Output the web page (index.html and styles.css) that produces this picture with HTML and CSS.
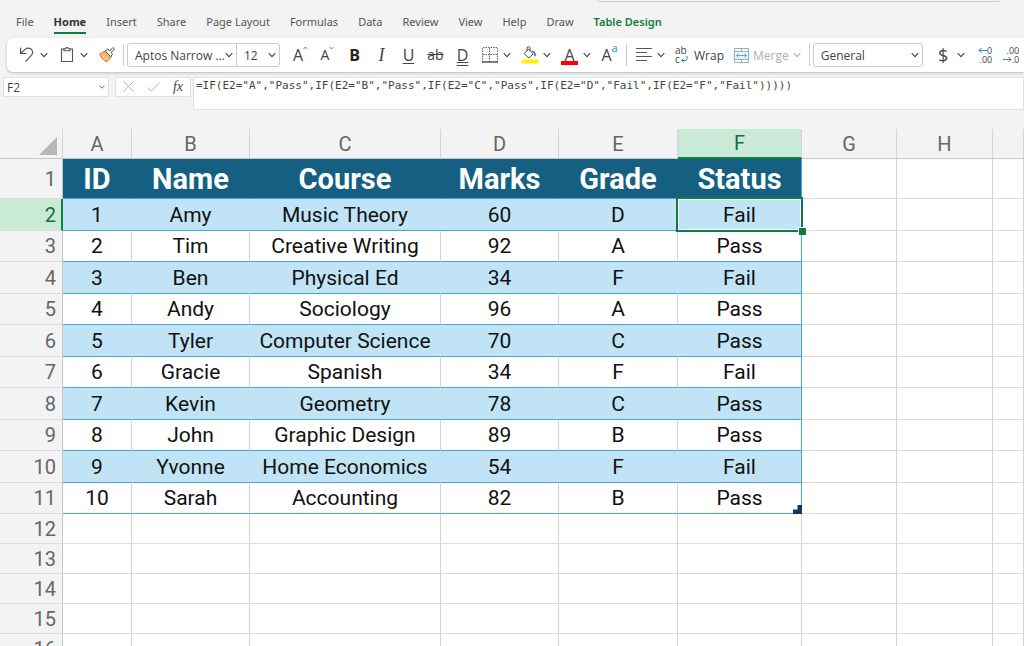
FILE: index.html
```html
<!DOCTYPE html>
<html lang="en">

<head>
  <meta charset="UTF-8">
  <meta name="viewport" content="width=device-width, initial-scale=1.0">
  <title>Grades</title>
  <link rel="stylesheet" href="styles.css">
</head>

<body>
  <svg class="defs" width="0" height="0" aria-hidden="true">
    <symbol id="chevron" viewBox="0 0 8 8">
      <path d="M.7 2.2 4 5.6l3.3-3.4" fill="none" stroke="currentColor" stroke-width="1.1" />
    </symbol>
  </svg>

  <div class="titlebar">
    <div class="search-edge"></div>
  </div>

  <nav class="tabs">
    <a href="#">File</a>
    <a href="#" class="active">Home</a>
    <a href="#">Insert</a>
    <a href="#">Share</a>
    <a href="#">Page Layout</a>
    <a href="#">Formulas</a>
    <a href="#">Data</a>
    <a href="#">Review</a>
    <a href="#">View</a>
    <a href="#">Help</a>
    <a href="#">Draw</a>
    <a href="#" class="context">Table Design</a>
  </nav>

  <div class="ribbon">
    <button class="tool" aria-label="Undo">
      <svg width="18" height="18" viewBox="0 0 18 18" fill="none" stroke="#555" stroke-width="1.2"><path d="M2.6 1.5v6h6M2.8 7.3 7.2 3.4c3-2.500 7-.9 7.400 2.300.2 1.700-.5 3-1.700 4.200L7.500 15.600" /></svg>
    </button>
    <button class="more" aria-label="Undo list"><svg width="8" height="8"><use href="#chevron" /></svg></button>
    <button class="tool" aria-label="Paste">
      <svg width="16" height="18" viewBox="0 0 16 18" fill="none" stroke="#555" stroke-width="1.1"><path d="M5 3H2.500v12.500h11V3H11" /><path d="M5 4.800V2.700h1.500a1.600 1.600 0 0 1 3 0H11v2.100z" /></svg>
    </button>
    <button class="more" aria-label="Paste options"><svg width="8" height="8"><use href="#chevron" /></svg></button>
    <button class="tool" aria-label="Format painter">
      <svg width="18" height="18" viewBox="0 0 18 18"><path d="M1.500 8 8 4.500l5.500 6.500L8.500 16Q3.500 13.500 1.500 8z" fill="#f7b36a" stroke="#ec7c1c" /><path d="m4.500 11 2-1.200M7 13.500l2-2" stroke="#fff" /><path d="m7.200 5 2.600-2 1.800 1.900 3.300-3.400 1.600 1.600-3.300 3.300 1.300 2-2 2.200z" fill="#fff" stroke="#444" /></svg>
    </button>
    <span class="divider"></span>

    <div class="combo">
      <label class="picker picker-font">
        <select aria-label="Font">
          <option>Aptos Narrow ...</option>
        </select>
        <svg width="8" height="8"><use href="#chevron" /></svg>
      </label>
      <label class="picker picker-size">
        <select aria-label="Font size">
          <option>12</option>
        </select>
        <svg width="8" height="8"><use href="#chevron" /></svg>
      </label>
    </div>

    <button class="tool letter" aria-label="Increase font size">A<svg class="caret" width="5" height="4" viewBox="0 0 5 4"><path d="m.5 3 2-2 2 2" fill="none" stroke="#2b88c8" /></svg></button>
    <button class="tool letter small" aria-label="Decrease font size">A<svg class="caret" width="5" height="4" viewBox="0 0 5 4"><path d="m.5 1 2 2 2-2" fill="none" stroke="#2b88c8" /></svg></button>
    <button class="tool letter bold">B</button>
    <button class="tool letter italic">I</button>
    <button class="tool letter underline">U</button>
    <button class="tool letter strike">ab</button>
    <button class="tool letter double">D</button>
    <button class="tool" aria-label="Borders">
      <svg width="16" height="16" viewBox="0 0 16 16" fill="none" stroke="#666"><path d="M.5 15V.5h15V15M7.500 1v14M1 7.500h14" stroke-dasharray="1.500 1" /><path d="M0 15h16" stroke="#444" stroke-width="1.400" /></svg>
    </button>
    <button class="more" aria-label="Border options"><svg width="8" height="8"><use href="#chevron" /></svg></button>
    <button class="tool" aria-label="Fill color">
      <svg width="18" height="18" viewBox="0 0 18 18"><path d="m7.600 3.200 4.700 4.600-4.600 4.300-4.500-4.500zM6 4.800V2.200a1.500 1.500 0 0 1 3 0v3" fill="none" stroke="#444" /><path d="M10.500 4.500q4.500-.5 4.500 6-2.500-.5-1.900-3z" fill="#2b78c4" /><path d="M.5 13.500h17V17.500H.5z" fill="#fff200" /></svg>
    </button>
    <button class="more" aria-label="Fill colors"><svg width="8" height="8"><use href="#chevron" /></svg></button>
    <button class="tool letter font-color">A</button>
    <button class="more" aria-label="Font colors"><svg width="8" height="8"><use href="#chevron" /></svg></button>
    <button class="tool letter grow">A<sup>a</sup></button>
    <span class="divider"></span>

    <button class="tool" aria-label="Align">
      <svg width="16" height="16" viewBox="0 0 16 16" stroke="#555" stroke-width="1.100"><path d="M0 1.500h16M0 5.500h11M0 9.500h16M0 13.500h11" /></svg>
    </button>
    <button class="more" aria-label="Align options"><svg width="8" height="8"><use href="#chevron" /></svg></button>
    <button class="wide">
      <span class="wrap-icon"><span>ab</span><span>c<svg width="8" height="7" viewBox="0 0 8 7" fill="none" stroke="#2b88c8"><path d="M7 0v2.500Q7 4.500 5 4.500H1.500M3.500 2.500l-2 2 2 2" /></svg></span></span>
      Wrap
    </button>
    <button class="wide disabled" disabled>
      <svg width="15" height="15" viewBox="0 0 15 15" fill="none" stroke="#a9a9a9"><path d="M.5.5h14v14H.5zM7.500 0v3.500M7.500 11.500V15" /><path d="M.5 3.500h14v8H.5z" stroke="#79b8e0" fill="#eef7fd" /><path d="M2.500 7.500h10M4.500 5.500l-2 2 2 2M10.500 5.500l2 2-2 2" stroke="#5ba8d8" /></svg>
      Merge
      <svg width="8" height="8"><use href="#chevron" /></svg>
    </button>
    <span class="divider"></span>

    <div class="combo">
      <label class="picker picker-format">
        <select aria-label="Number format">
          <option>General</option>
        </select>
        <svg width="8" height="8"><use href="#chevron" /></svg>
      </label>
    </div>
    <button class="tool letter currency">$</button>
    <button class="more" aria-label="Currency options"><svg width="8" height="8"><use href="#chevron" /></svg></button>
    <button class="tool decimals">
      <span><svg width="9" height="7" viewBox="0 0 9 7" fill="none" stroke="#2b88c8"><path d="M9 3.500H1M3.500 1 1 3.500 3.500 6" /></svg>0</span>
      <span>.00</span>
    </button>
    <button class="tool decimals">
      <span>.00</span>
      <span><svg width="9" height="7" viewBox="0 0 9 7" fill="none" stroke="#2b88c8"><path d="M0 3.500h8M5.500 1 8 3.500 5.500 6" /></svg>.0</span>
    </button>
  </div>

  <div class="formula-bar">
    <label class="name-box">
      <input type="text" value="F2" aria-label="Name box">
      <svg width="6" height="6"><use href="#chevron" /></svg>
    </label>
    <div class="formula-actions">
      <button aria-label="Cancel"><svg width="11" height="11" viewBox="0 0 11 11" stroke="#b5b5b5"><path d="m.5.5 10 10M10.500.5l-10 10" /></svg></button>
      <button aria-label="Enter"><svg width="13" height="10" viewBox="0 0 13 10" fill="none" stroke="#b5b5b5"><path d="m.5 5.500 3.700 3.700L12.500.7" /></svg></button>
      <button class="fx">fx</button>
    </div>
    <input class="formula" type="text" aria-label="Formula" value='=IF(E2="A","Pass",IF(E2="B","Pass",IF(E2="C","Pass",IF(E2="D","Fail",IF(E2="F","Fail")))))'>
  </div>

  <div class="sheet">
    <table class="grid">
      <colgroup>
        <col class="col-head">
        <col class="col-a">
        <col class="col-b">
        <col class="col-c">
        <col class="col-d">
        <col class="col-e">
        <col class="col-f">
        <col class="col-g">
        <col class="col-h">
        <col>
      </colgroup>
      <thead>
        <tr>
          <th class="corner"><svg width="18" height="18" viewBox="0 0 18 18"><path d="M18 0v18H0z" fill="#b8b8b8" /></svg></th>
          <th>A</th><th>B</th><th>C</th><th>D</th><th>E</th><th class="selected">F</th><th>G</th><th>H</th><th></th>
        </tr>
      </thead>
      <tbody class="data">
        <tr class="title"><th>1</th><td>ID</td><td>Name</td><td>Course</td><td>Marks</td><td>Grade</td><td>Status</td><td></td><td></td><td></td></tr>
        <tr class="band"><th class="selected">2</th><td>1</td><td>Amy</td><td>Music Theory</td><td>60</td><td>D</td><td class="current">Fail</td><td></td><td></td><td></td></tr>
        <tr><th>3</th><td>2</td><td>Tim</td><td>Creative Writing</td><td>92</td><td>A</td><td>Pass</td><td></td><td></td><td></td></tr>
        <tr class="band"><th>4</th><td>3</td><td>Ben</td><td>Physical Ed</td><td>34</td><td>F</td><td>Fail</td><td></td><td></td><td></td></tr>
        <tr><th>5</th><td>4</td><td>Andy</td><td>Sociology</td><td>96</td><td>A</td><td>Pass</td><td></td><td></td><td></td></tr>
        <tr class="band"><th>6</th><td>5</td><td>Tyler</td><td>Computer Science</td><td>70</td><td>C</td><td>Pass</td><td></td><td></td><td></td></tr>
        <tr><th>7</th><td>6</td><td>Gracie</td><td>Spanish</td><td>34</td><td>F</td><td>Fail</td><td></td><td></td><td></td></tr>
        <tr class="band"><th>8</th><td>7</td><td>Kevin</td><td>Geometry</td><td>78</td><td>C</td><td>Pass</td><td></td><td></td><td></td></tr>
        <tr><th>9</th><td>8</td><td>John</td><td>Graphic Design</td><td>89</td><td>B</td><td>Pass</td><td></td><td></td><td></td></tr>
        <tr class="band"><th>10</th><td>9</td><td>Yvonne</td><td>Home Economics</td><td>54</td><td>F</td><td>Fail</td><td></td><td></td><td></td></tr>
        <tr><th>11</th><td>10</td><td>Sarah</td><td>Accounting</td><td>82</td><td>B</td><td class="table-end">Pass</td><td></td><td></td><td></td></tr>
      </tbody>
      <tbody class="empty">
        <tr><th>12</th><td></td><td></td><td></td><td></td><td></td><td></td><td></td><td></td><td></td></tr>
        <tr><th>13</th><td></td><td></td><td></td><td></td><td></td><td></td><td></td><td></td><td></td></tr>
        <tr><th>14</th><td></td><td></td><td></td><td></td><td></td><td></td><td></td><td></td><td></td></tr>
        <tr><th>15</th><td></td><td></td><td></td><td></td><td></td><td></td><td></td><td></td><td></td></tr>
        <tr><th>16</th><td></td><td></td><td></td><td></td><td></td><td></td><td></td><td></td><td></td></tr>
      </tbody>
    </table>
  </div>
</body>

</html>
```

FILE: styles.css
```css
* {
  box-sizing: border-box;
}

body {
  margin: 0;
  height: 100vh;
  display: flex;
  flex-direction: column;
  overflow: hidden;
  background-color: #f3f3f3;
  color: #444;
  font-family: "Open Sans", "Noto Sans", sans-serif;
  font-size: 12px;
}

button,
input,
select {
  margin: 0;
  padding: 0;
  border: none;
  background: none;
  color: inherit;
  font: inherit;
}

.defs {
  position: absolute;
}

/* top of the window */
.titlebar {
  display: flex;
  padding: 0 24px 0 597px;
}

.search-edge {
  flex: 1;
  height: 2px;
  border-bottom: 1px solid #d0d0d0;
  border-radius: 0 0 4px 4px;
}

.tabs {
  display: flex;
  gap: 20px;
  height: 36px;
  padding: 10px 16px 0;
  font-family: "Noto Sans", "Open Sans", sans-serif;
  font-size: 11px;
  line-height: 20px;
  white-space: nowrap;
}

.tabs a {
  height: 22px;
  color: #555;
  text-decoration: none;
}

.tabs .active {
  border-bottom: 2px solid #107c41;
  color: #333;
  font-weight: bold;
}

.tabs .context {
  color: #107c41;
  font-weight: 600;
}

/* ribbon */
.ribbon {
  display: flex;
  align-items: center;
  flex-shrink: 0;
  height: 34px;
  margin-left: 7px;
  padding-left: 6px;
  background-color: #fff;
  border-radius: 6px 0 0 6px;
  box-shadow: 0 1px 3px rgba(0, 0, 0, 0.25);
  white-space: nowrap;
}

.ribbon > * {
  flex-shrink: 0;
}

.tool,
.more {
  display: flex;
  align-items: center;
  height: 28px;
}

.tool {
  justify-content: center;
  width: 27px;
}

.more {
  width: 13px;
}

.divider {
  width: 1px;
  height: 22px;
  margin: 0 3px;
  background-color: #ccc;
}

.combo {
  display: flex;
  height: 24px;
  margin-right: 7px;
  border: 1px solid #ccc;
  border-radius: 3px;
}

.picker,
.name-box {
  display: grid;
  align-items: center;
}

.picker select,
.picker svg,
.name-box input,
.name-box svg {
  grid-area: 1 / 1;
}

.picker svg,
.name-box svg {
  justify-self: end;
  margin-right: 3px;
  pointer-events: none;
}

.picker select {
  width: 100%;
  height: 22px;
  padding-left: 7px;
  appearance: none;
}

.picker-font,
.picker-format {
  width: 108px;
}

.picker-size {
  width: 43px;
  border-left: 1px solid #ccc;
}

.letter {
  font-size: 16px;
  line-height: 20px;
}

.small {
  font-size: 14px;
}

.caret {
  align-self: flex-start;
  margin-top: 5px;
}

.bold {
  font-weight: bold;
  color: #222;
}

.italic {
  font-family: "Liberation Serif", serif;
  font-style: italic;
  font-size: 18px;
}

.underline {
  text-decoration: underline;
  text-underline-offset: 2px;
}

.strike {
  font-size: 14px;
  text-decoration: line-through;
}

.double {
  text-decoration: underline double;
}

.font-color::before {
  content: "";
  position: absolute;
  width: 17px;
  height: 4px;
  margin-top: 16px;
  background-color: #f00;
}

.grow sup {
  align-self: flex-start;
  color: #2b88c8;
  font-size: 11px;
  line-height: 14px;
}

.wide {
  display: flex;
  align-items: center;
  gap: 4px;
  padding: 0 5px;
}

.disabled {
  color: #b0b0b0;
}

.wrap-icon {
  display: grid;
  width: 15px;
  font-size: 10px;
  line-height: 9px;
  text-align: left;
}

.currency {
  font-size: 18px;
}

.decimals {
  flex-direction: column;
  align-items: center;
  font-size: 9px;
  line-height: 9px;
}

.decimals span {
  display: flex;
  justify-content: flex-end;
  align-items: center;
  width: 18px;
}

/* name box and formula */
.formula-bar {
  display: flex;
  align-items: flex-start;
  flex-shrink: 0;
  height: 57px;
  padding: 5px 0 0 3px;
}

.name-box,
.formula-actions {
  height: 20px;
  background-color: #fff;
  border: 1px solid #e1e1e1;
}

.name-box {
  width: 106px;
  margin-right: 6px;
}

.name-box input {
  width: 100%;
  padding-left: 3px;
}

.formula-actions {
  display: flex;
  align-items: center;
  justify-content: space-between;
  width: 76px;
  margin-right: 2px;
  padding: 0 7px;
}

.fx {
  font-family: "Liberation Serif", serif;
  font-size: 14px;
  font-style: italic;
  line-height: 16px;
}

.formula {
  flex: 1;
  height: 33px;
  padding: 0 0 16px 2px;
  background-color: #fff;
  border: 1px solid #e1e1e1;
  font-family: "DejaVu Sans Mono", monospace;
  font-size: 11px;
}

/* sheet */
.sheet {
  flex: 1;
  overflow: hidden;
}

.grid {
  width: 100%;
  table-layout: fixed;
  border-collapse: separate;
  border-spacing: 0;
  background-color: #fff;
  color: #111;
  font-family: Roboto, Inter, sans-serif;
  font-size: 21px;
  line-height: 24px;
  text-align: center;
}

.col-head {
  width: 63px;
}

.col-a {
  width: 69px;
}

.col-b,
.col-d {
  width: 118px;
}

.col-c {
  width: 191px;
}

.col-e {
  width: 119px;
}

.col-f {
  width: 124px;
}

.col-g {
  width: 95px;
}

.col-h {
  width: 96px;
}

.grid th,
.grid td {
  padding: 0;
  border-right: 1px solid #d4d4d4;
  border-bottom: 1px solid #dcdcdc;
  white-space: nowrap;
}

.grid th {
  background-color: #f3f3f3;
  color: #666;
  font-size: 20px;
  font-weight: normal;
}

.grid thead th {
  height: 30px;
  border-bottom-color: #c6c6c6;
}

.grid .corner {
  padding: 4px 5px 0 0;
  line-height: 0;
  text-align: right;
}

.grid tbody th {
  padding-right: 6px;
  border-right-color: #c6c6c6;
  text-align: right;
}

.grid .selected {
  background-color: #c9ead6;
  color: #1b6b3f;
}

.grid thead .selected {
  border-bottom: 2px solid #107c41;
}

.grid tbody .selected {
  padding-right: 5px;
  border-right: 2px solid #107c41;
}

.data tr {
  height: 31px;
}

.data .band {
  height: 32px;
}

.data .title {
  height: 40px;
}

.empty tr {
  height: 30px;
}

/* the six table columns */
.data td:nth-child(-n+7) {
  border-bottom-color: #45a5d9;
}

.data td:nth-child(7) {
  border-right-color: #45a5d9;
}

.title td:nth-child(-n+7) {
  background-color: #156082;
  color: #fff;
  font-size: 29px;
  font-weight: bold;
  line-height: 36px;
}

.title td:nth-child(-n+6) {
  border-right-color: #156082;
}

.band td:nth-child(-n+7) {
  background-color: #c0e4f5;
}

.band td:nth-child(-n+6) {
  border-right-color: #c0e4f5;
}

.current,
.table-end {
  position: relative;
}

.current::before {
  content: "";
  position: absolute;
  inset: -2px;
  border: 2px solid #107c41;
  box-shadow: inset 0 0 0 1px #fff;
}

.current::after {
  content: "";
  position: absolute;
  right: -5px;
  bottom: -5px;
  z-index: 1;
  width: 7px;
  height: 7px;
  background-color: #107c41;
  border: solid #fff;
  border-width: 1px 0 0 1px;
}

.table-end::after {
  content: "";
  position: absolute;
  right: -1px;
  bottom: -1px;
  width: 9px;
  height: 9px;
  background-color: #0b3a63;
  clip-path: polygon(50% 0, 100% 0, 100% 100%, 0 100%, 0 50%, 50% 50%);
}
```
